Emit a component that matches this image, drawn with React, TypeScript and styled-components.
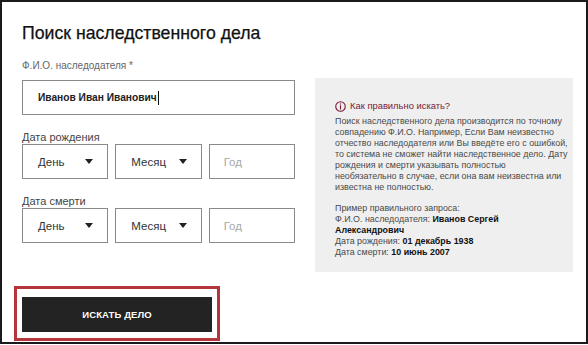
import styled, { createGlobalStyle } from 'styled-components';

const GlobalStyle = createGlobalStyle`
  html, body {
    margin: 0;
    padding: 0;
    background: #fff;
  }
  body {
    font-family: 'Liberation Sans', Arial, sans-serif;
  }
`;

const SelectField = ({ label }: { label: string }) => (
  <Select>
    <span>{label}</span>
    <Arrow />
  </Select>
);

const DateRow = ({ title }: { title: string }) => (
  <>
    <DateLabel>{title}</DateLabel>
    <Row>
      <SelectField label="День" />
      <SelectField label="Месяц" />
      <YearField>Год</YearField>
    </Row>
  </>
);

const InfoIcon = () => (
  <svg width="11" height="11" viewBox="0 0 12 12" fill="none">
    <circle cx="6" cy="6" r="5.2" stroke="#7a1a36" strokeWidth="1.2" />
    <rect x="5.4" y="2.6" width="1.2" height="1.3" fill="#7a1a36" />
    <rect x="5.4" y="4.7" width="1.2" height="4.6" fill="#7a1a36" />
  </svg>
);

const App = () => {
  return (
    <Frame>
      <GlobalStyle />
      <Title>Поиск наследственного дела</Title>
      <Body>
        <Form>
          <NameLabel>Ф.И.О. наследодателя *</NameLabel>
          <NameInput>
            Иванов Иван Иванович
            <Caret />
          </NameInput>
          <DateRow title="Дата рождения" />
          <DateRow title="Дата смерти" />
        </Form>
        <Info>
          <InfoHeading>
            <InfoIcon />
            Как правильно искать?
          </InfoHeading>
          <InfoText>
            Поиск наследственного дела производится по точному
            <br />
            совпадению Ф.И.О. Например, Если Вам неизвестно
            <br />
            отчество наследодателя или Вы введёте его с ошибкой,
            <br />
            то система не сможет найти наследственное дело. Дату
            <br />
            рождения и смерти указывать полностью
            <br />
            необязательно в случае, если она вам неизвестна или
            <br />
            известна не полностью.
          </InfoText>
          <InfoText $spaced>
            Пример правильного запроса:
            <br />
            Ф.И.О. наследодателя: <b>Иванов Сергей</b>
            <br />
            <b>Александрович</b>
            <br />
            Дата рождения: <b>01 декабрь 1938</b>
            <br />
            Дата смерти: <b>10 июнь 2007</b>
          </InfoText>
        </Info>
      </Body>
      <Highlight>
        <SearchButton>ИСКАТЬ ДЕЛО</SearchButton>
      </Highlight>
    </Frame>
  );
};

const Frame = styled.div`
  box-sizing: border-box;
  width: 588px;
  height: 344px;
  border: 2px solid #1a1a1a;
  padding: 20px 0 0 20px;
  display: flex;
  flex-direction: column;
  overflow: hidden;
`;

const Title = styled.h1`
  margin: 0;
  font-size: 17.7px;
  line-height: 22px;
  font-weight: normal;
  color: #111;
  -webkit-text-stroke: 0.25px #111;
`;

const Body = styled.div`
  display: flex;
  align-items: flex-start;
  gap: 20px;
  margin-top: 15px;
`;

const Form = styled.div`
  width: 273px;
  display: flex;
  flex-direction: column;
`;

const NameLabel = styled.div`
  font-size: 10px;
  line-height: 14px;
  color: #666;
  margin-bottom: 7px;
`;

const Box = styled.div`
  box-sizing: border-box;
  height: 35px;
  border: 1px solid #8a8a8a;
  background: #fff;
  display: flex;
  align-items: center;
`;

const NameInput = styled(Box)`
  padding-left: 15px;
  font-size: 10.2px;
  font-weight: bold;
  color: #222;
`;

const Caret = styled.span`
  display: inline-block;
  width: 1px;
  height: 14px;
  margin-left: 1px;
  background: #111;
`;

const DateLabel = styled.div`
  margin-top: 15px;
  font-size: 11px;
  line-height: 14px;
  color: #444;
`;

const Row = styled.div`
  display: grid;
  grid-template-columns: repeat(3, 1fr);
  gap: 7px;
`;

const Select = styled(Box)`
  justify-content: space-between;
  padding: 0 14px 0 15px;
  font-size: 11.5px;
  color: #333;
`;

const Arrow = styled.span`
  width: 0;
  height: 0;
  border-left: 4px solid transparent;
  border-right: 4px solid transparent;
  border-top: 5px solid #222;
`;

const YearField = styled(Box)`
  padding-left: 14px;
  font-size: 11.5px;
  color: #a8a8a8;
`;

const Info = styled.div`
  box-sizing: border-box;
  width: 258px;
  height: 194px;
  margin-top: 19px;
  padding: 21px 4px 0 20px;
  background: #efefef;
`;

const InfoHeading = styled.div`
  display: flex;
  align-items: center;
  gap: 4px;
  font-size: 9.4px;
  line-height: 14px;
  color: #7a1a36;
  margin-bottom: 3px;
`;

const InfoText = styled.p<{ $spaced?: boolean }>`
  margin: ${({ $spaced }) => ($spaced ? '10px 0 0' : '0')};
  font-size: 8.9px;
  line-height: 11px;
  color: #4a4a4a;
  white-space: nowrap;

  b {
    color: #111;
  }
`;

const Highlight = styled.div`
  box-sizing: border-box;
  width: 206px;
  height: 55px;
  margin: 14px 0 0 -8px;
  padding: 8px 5px 6px;
  border: 3px solid #b5353c;
`;

const SearchButton = styled.button`
  width: 100%;
  height: 35px;
  border: none;
  background: #232323;
  color: #fff;
  font-family: 'Liberation Sans', Arial, sans-serif;
  font-size: 9.5px;
  font-weight: bold;
  letter-spacing: 0.1px;
`;

export default App;
